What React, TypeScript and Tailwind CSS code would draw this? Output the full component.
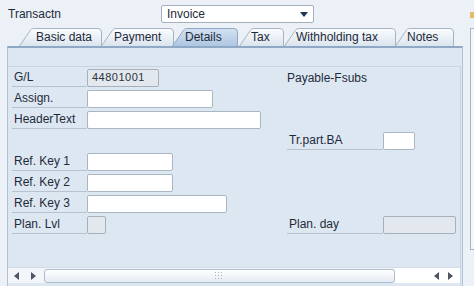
import React from "react";

type TabDef = { label: string; cls: string; w: number; pad: string; active?: boolean };

const tabs: TabDef[] = [
  { label: "Basic data", cls: "ml-[19px] w-[83px]", w: 83, pad: "pl-[17px]" },
  { label: "Payment", cls: "-ml-px w-[73px]", w: 73, pad: "pl-[13px]" },
  { label: "Details", cls: "-ml-[2px] w-[66px]", w: 66, pad: "pl-[13px]", active: true },
  { label: "Tax", cls: "ml-px w-[45px]", w: 45, pad: "pl-[12px]" },
  { label: "Withholding tax", cls: "w-[112px]", w: 112, pad: "pl-[12px]" },
  { label: "Notes", cls: "-ml-px w-[59px]", w: 59, pad: "pl-[12px]" },
];

function Tab({ t }: { t: TabDef }) {
  const w = t.w;
  const id = "g" + t.label.replace(/\s/g, "");
  const d = `M0.5,18 L11.5,2.2 Q12.6,0.5 14.5,0.5 L${w - 4},0.5 Q${w - 0.5},0.5 ${w - 0.5},4 L${w - 0.5},18`;
  return (
    <div className={`relative h-[18px] shrink-0 ${t.cls}`}>
      <svg className="absolute inset-0" width={w} height={18} viewBox={`0 0 ${w} 18`}>
        <defs>
          <linearGradient id={id} x1="0" y1="0" x2="0" y2="1">
            <stop offset="0" stopColor={t.active ? "#d3e2f2" : "#fbfcfe"} />
            <stop offset="1" stopColor={t.active ? "#aec6e1" : "#dbe4ee"} />
          </linearGradient>
        </defs>
        <path d={d + " Z"} fill={`url(#${id})`} stroke="none" />
        <path d={d} fill="none" stroke={t.active ? "#8ea8c6" : "#a5b3c3"} strokeWidth="1" />
      </svg>
      <div className={`relative flex h-full items-center ${t.pad} text-[12px] text-[#1d2a3a]`}>{t.label}</div>
    </div>
  );
}

function Label({ children, right }: { children: React.ReactNode; right?: boolean }) {
  return (
    <div
      className={`flex h-[18px] shrink-0 items-center border-b border-[#b7c2ce] pl-[2px] text-[12px] text-[#1d2a3a] ${
        right ? "w-[96px]" : "w-[75px]"
      }`}
    >
      {children}
    </div>
  );
}

function Field({ cls, gray, children }: { cls: string; gray?: boolean; children?: React.ReactNode }) {
  return (
    <div
      className={`flex h-[18px] shrink-0 items-center rounded-[2px] border pl-[4px] text-[11px] tracking-[0.5px] text-[#2a3440] ${
        gray ? "border-[#a6b0ba] bg-[#e2e8ee]" : "border-[#aab6c3] bg-white"
      } ${cls}`}
    >
      {children}
    </div>
  );
}

function Row({ left, right }: { left?: React.ReactNode; right?: React.ReactNode }) {
  return (
    <div className="flex h-[21px] items-center">
      <div className="flex w-[279px] shrink-0 items-center pl-[4px]">{left}</div>
      <div className="flex items-center">{right}</div>
    </div>
  );
}

function Arrow({ dir }: { dir: "l" | "r" }) {
  return (
    <svg width="5" height="8" viewBox="0 0 5 8">
      <polygon points={dir === "l" ? "5,0 5,8 0,4" : "0,0 0,8 5,4"} fill="#4b5563" />
    </svg>
  );
}

function Grip() {
  return (
    <svg width="7" height="7" viewBox="0 0 7 7">
      {[0, 3, 6].map((y) =>
        [0, 3, 6].map((x) => <rect key={`${x}-${y}`} x={x} y={y} width="1" height="1" fill="#a9b4c0" />)
      )}
    </svg>
  );
}

export default function App() {
  return (
    <div className="flex h-[286px] w-[474px] flex-col overflow-hidden bg-[#ebf1f7] font-['Liberation_Sans',Arial,sans-serif]">
      {/* top: transaction selector */}
      <div className="flex h-[28px] shrink-0 items-center">
        <div className="w-[161px] pl-[8px] text-[12px] text-[#1d2a3a]">Transactn</div>
        <div className="flex h-[18px] w-[153px] items-center justify-between rounded-[2px] border border-[#a4b0bd] bg-white pl-[5px] pr-[5px] text-[12px] text-[#1d2a3a]">
          <span>Invoice</span>
          <svg width="8" height="5" viewBox="0 0 8 5">
            <polygon points="0,0 8,0 4,5" fill="#1f3556" />
          </svg>
        </div>
        <div className="ml-auto h-[6px] w-[4px] self-start mt-[12px] bg-[#e3b96c]" />
      </div>

      <div className="flex flex-1">
        <div className="flex w-[464px] shrink-0 flex-col">
          {/* tabs */}
          <div className="flex h-[18px] shrink-0 items-end">
            {tabs.map((t) => (
              <Tab key={t.label} t={t} />
            ))}
          </div>

          {/* panel */}
          <div className="ml-[7px] flex w-[456px] flex-1 flex-col border-x border-t-2 border-[#b3c2d2] border-t-[#8ea8c6] bg-[#dde7f2] pr-px pt-[18px]">
            <div className="flex flex-1 flex-col border-r border-t border-[#c7d4e2]">
              <Row
                left={
                  <>
                    <Label>G/L</Label>
                    <Field cls="w-[72px]" gray>
                      44801001
                    </Field>
                  </>
                }
                right={<div className="pl-[0px] text-[12px] text-[#1d2a3a]">Payable-Fsubs</div>}
              />
              <Row
                left={
                  <>
                    <Label>Assign.</Label>
                    <Field cls="w-[126px]" />
                  </>
                }
              />
              <Row
                left={
                  <>
                    <Label>HeaderText</Label>
                    <Field cls="w-[174px]" />
                  </>
                }
              />
              <Row
                right={
                  <>
                    <Label right>Tr.part.BA</Label>
                    <Field cls="w-[32px]" />
                  </>
                }
              />
              <Row
                left={
                  <>
                    <Label>Ref. Key 1</Label>
                    <Field cls="w-[86px]" />
                  </>
                }
              />
              <Row
                left={
                  <>
                    <Label>Ref. Key 2</Label>
                    <Field cls="w-[86px]" />
                  </>
                }
              />
              <Row
                left={
                  <>
                    <Label>Ref. Key 3</Label>
                    <Field cls="w-[140px]" />
                  </>
                }
              />
              <Row
                left={
                  <>
                    <Label>Plan. Lvl</Label>
                    <Field cls="w-[19px]" gray />
                  </>
                }
                right={
                  <>
                    <Label right>Plan. day</Label>
                    <Field cls="w-[73px]" gray />
                  </>
                }
              />
              <div className="flex-1" />

              {/* horizontal scroll bar */}
              <div className="mb-[3px] flex h-[16px] shrink-0 items-center border-t border-[#d3dde8] bg-[#f2f6fa]">
                <div className="flex w-[36px] items-center gap-[12px] pl-[6px]">
                  <Arrow dir="l" />
                  <Arrow dir="r" />
                </div>
                <div className="flex h-[14px] w-[351px] items-center justify-end rounded-[3px] border border-[#aebdcd] bg-gradient-to-b from-[#ffffff] to-[#e4ebf3] pr-[172px]">
                  <Grip />
                </div>
                <div className="flex flex-1 items-center justify-end gap-[9px] bg-white pr-[7px] h-full">
                  <Arrow dir="l" />
                  <Arrow dir="r" />
                </div>
              </div>
            </div>
          </div>
        </div>

        {/* neighbouring frame at right edge */}
        <div className="ml-[6px] h-[222px] flex-1 border-l border-t border-b border-[#a9b7c6] bg-[#f4f7fa]" />
      </div>
    </div>
  );
}
